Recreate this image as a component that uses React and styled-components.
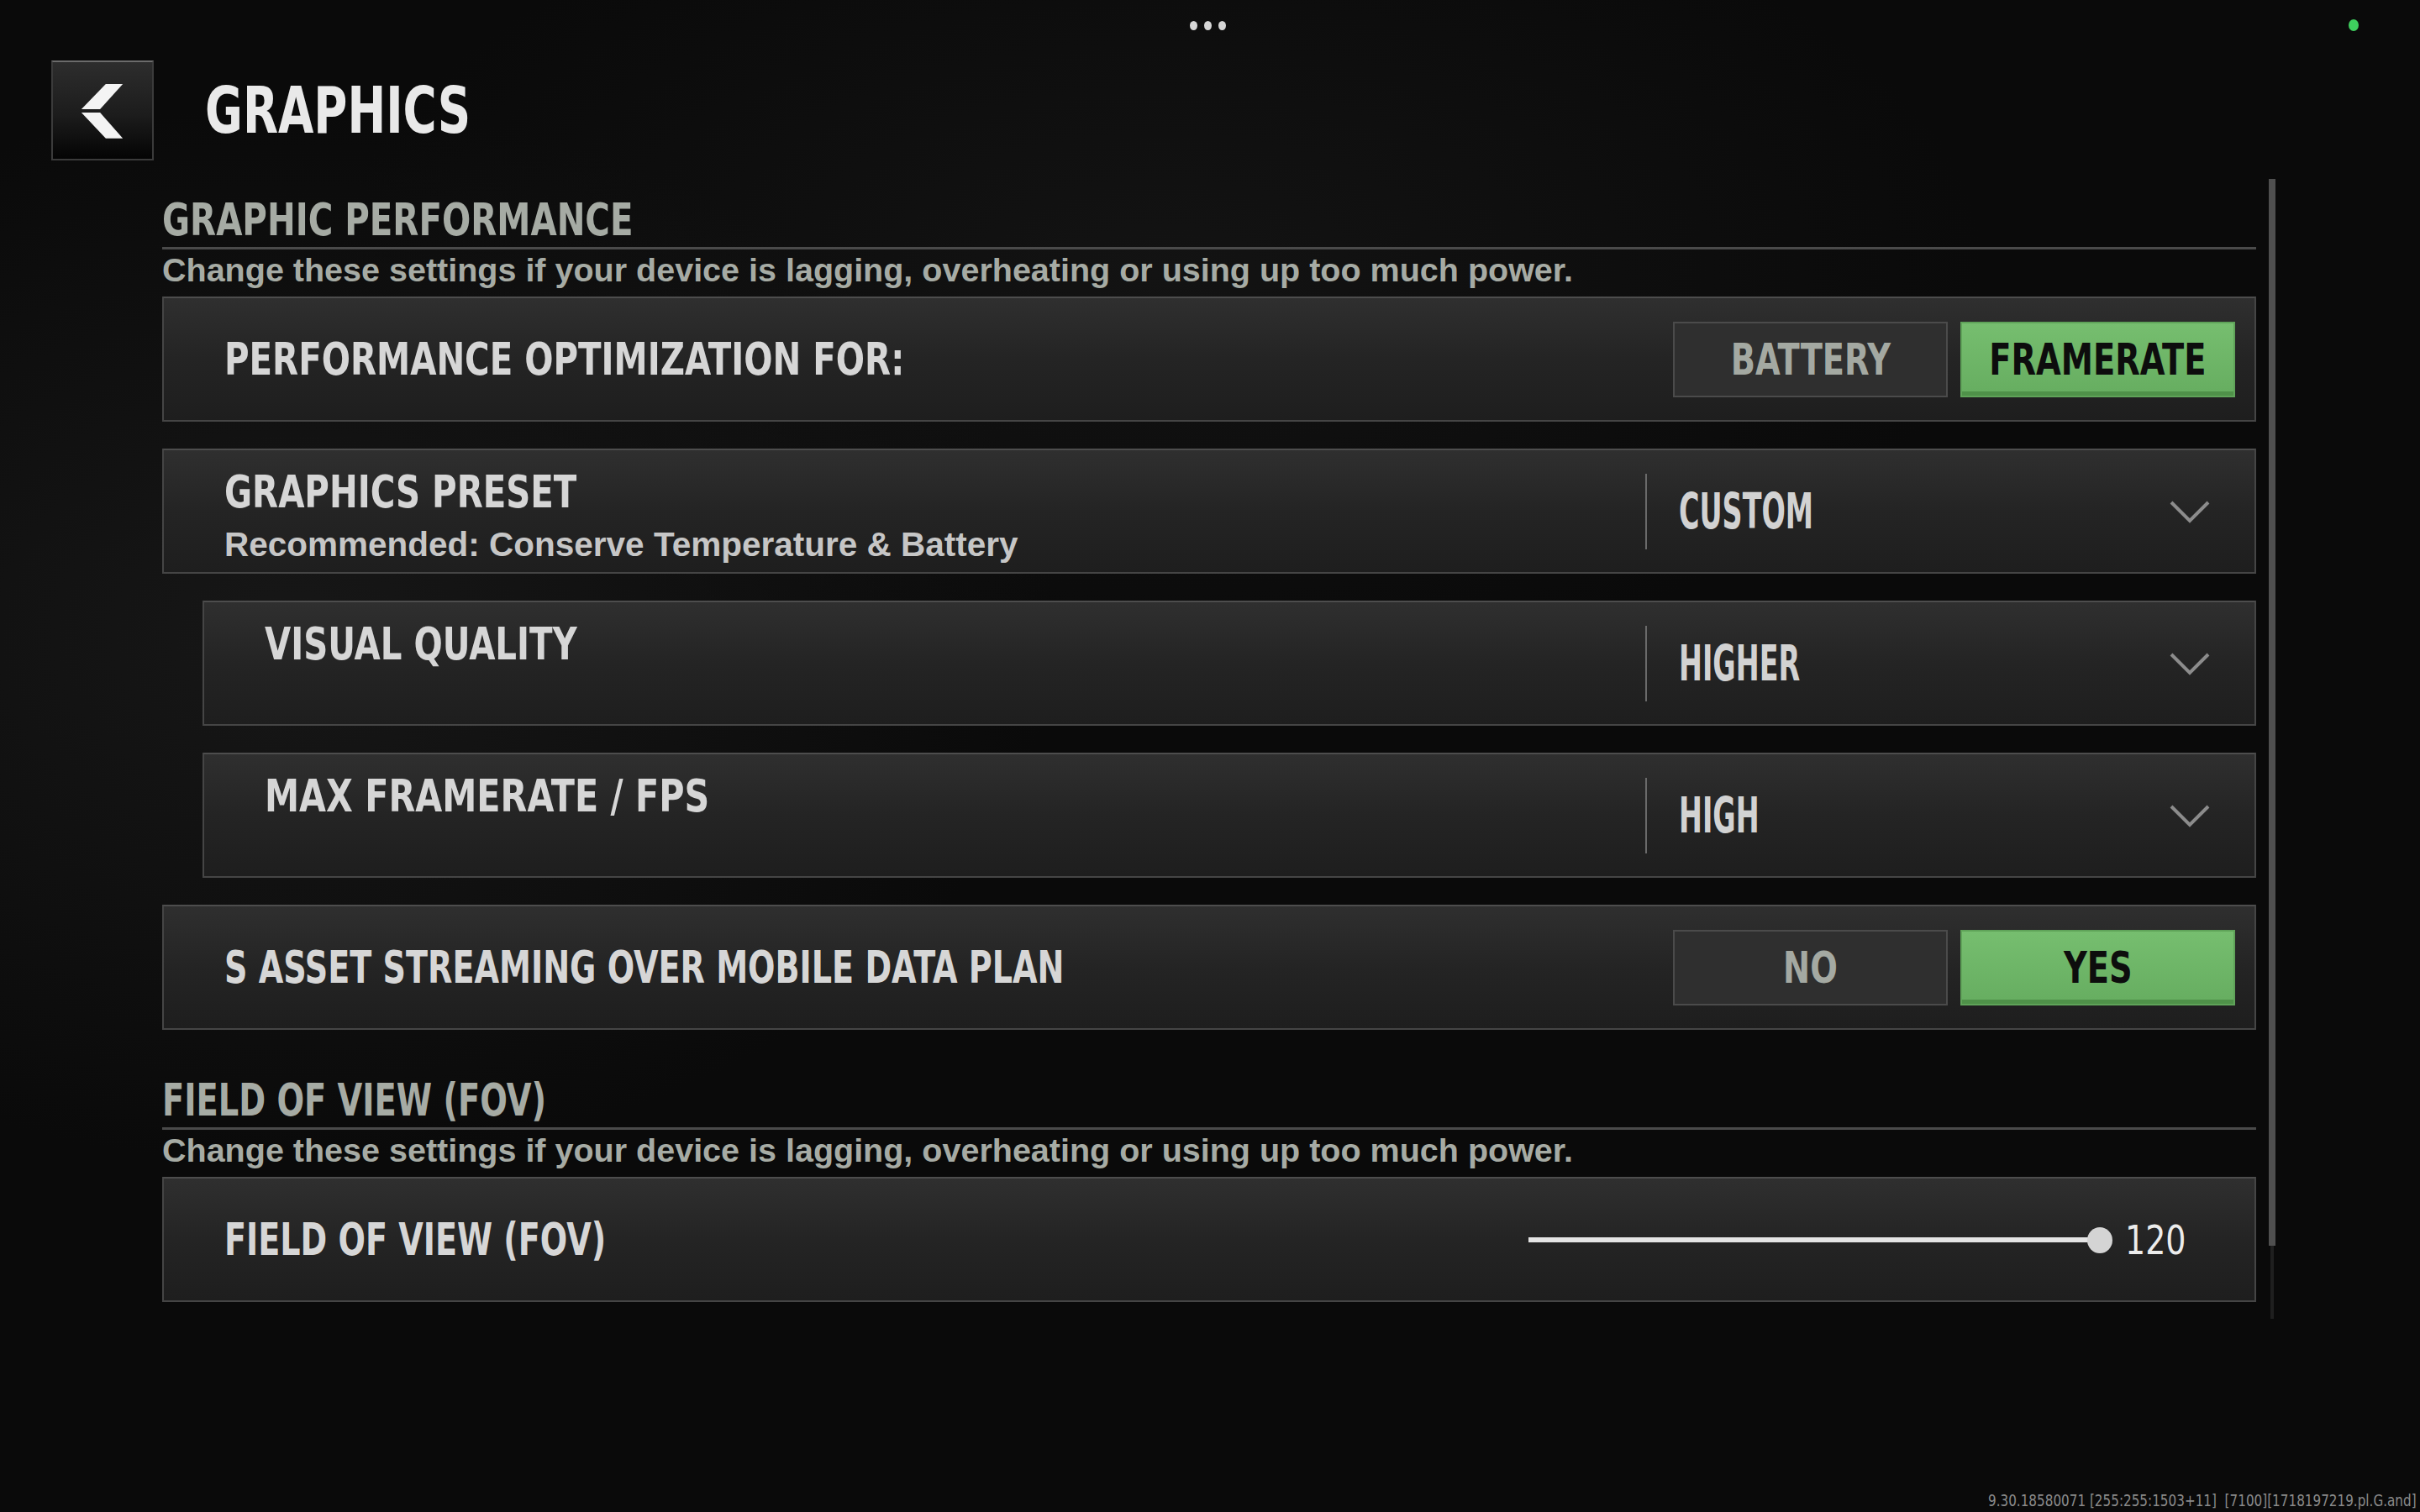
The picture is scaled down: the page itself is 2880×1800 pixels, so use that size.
import React from 'react';
import styled, { createGlobalStyle, css } from 'styled-components';

const GlobalStyle = createGlobalStyle`
    html, body {
        margin: 0;
        padding: 0;
        background: #0a0a0a;
    }
`;

const narrow = `"Liberation Sans Narrow", "DejaVu Sans Condensed", "Liberation Sans", sans-serif`;
const wide = `"Liberation Sans", "DejaVu Sans", sans-serif`;

// the game font is much narrower than anything installed, so caps text is squeezed
const squeeze = (x, origin = 'left') => css`
    display: inline-block;
    white-space: nowrap;
    transform: scaleX(${x});
    transform-origin: ${origin} center;
`;

const Page = styled.div`
    width: 2880px;
    height: 1800px;
    position: relative;
    overflow: hidden;
    background:
        radial-gradient(ellipse 1300px 900px at 12% 42%, #171717 0%, rgba(10, 10, 10, 0) 70%),
        radial-gradient(ellipse 1400px 700px at 48% 18%, #131313 0%, rgba(10, 10, 10, 0) 70%),
        #0a0a0a;
    font-family: ${narrow};
`;

const Dots = styled.div`
    position: absolute;
    top: 25px;
    left: 1416px;
    display: flex;
    gap: 8px;

    span {
        width: 9px;
        height: 11px;
        border-radius: 50%;
        background: #d6d6d6;
    }
`;

const StatusDot = styled.div`
    position: absolute;
    top: 23px;
    left: 2795px;
    width: 12px;
    height: 14px;
    border-radius: 50%;
    background: #3ecf5e;
`;

const Header = styled.header`
    display: flex;
    align-items: center;
    gap: 61px;
    padding: 72px 0 0 61px;
`;

const BackButton = styled.button`
    width: 122px;
    height: 119px;
    padding: 0;
    display: flex;
    align-items: center;
    justify-content: center;
    box-sizing: border-box;
    border: 2px solid #3b3b3b;
    border-top-color: #6b6b6b;
    background: linear-gradient(180deg, #2d2d2d 0%, #1c1c1c 55%, #040404 100%);
    cursor: pointer;
`;

const Title = styled.h1`
    margin: 0;
    font-size: 76px;
    line-height: 1;
    font-weight: 700;
    color: #e9e9e9;
    ${squeeze(0.8)}
`;

const Body = styled.div`
    display: flex;
    margin-top: 22px;
    padding-left: 193px;
`;

const Content = styled.main`
    width: 2492px;
    padding-top: 16px;
    display: flex;
    flex-direction: column;
`;

const Scrollbar = styled.div`
    margin-left: 15px;
    width: 8px;
    height: 1357px;
    display: flex;
    flex-direction: column;
    align-items: center;
`;

const ScrollThumb = styled.div`
    width: 8px;
    height: 1270px;
    background: #4f4f4f;
`;

const ScrollTrack = styled.div`
    width: 4px;
    flex: 1;
    background: #1f1f1f;
`;

const SectionTitle = styled.h2`
    margin: ${({ first }) => (first ? '0' : '51px 0 0')};
    font-size: 54px;
    line-height: 65px;
    font-weight: 700;
    color: #a6aba4;
    border-bottom: 3px solid #4a4a4a;

    span {
        ${({ first }) => squeeze(first ? 0.83 : 0.79)}
    }
`;

const SectionDesc = styled.p`
    margin: 0 0 8px;
    font-family: ${wide};
    font-size: 39.5px;
    line-height: 48px;
    font-weight: 700;
    color: #a6aba4;
`;

const Row = styled.div`
    box-sizing: border-box;
    height: 149px;
    margin-top: ${({ first }) => (first ? '0' : '32px')};
    margin-left: ${({ indent }) => (indent ? '48px' : '0')};
    display: flex;
    align-items: ${({ top }) => (top ? 'stretch' : 'center')};
    border: 2px solid #454545;
    border-top-color: #4d4d4d;
    background: linear-gradient(180deg, #2f2f2f 0%, #242424 50%, #1e1e1e 100%);
`;

const LabelBlock = styled.div`
    flex: 1;
    min-width: 0;
    padding-left: 72px;
    ${({ top }) =>
        top &&
        css`
            padding-top: 17px;
        `}
`;

const Label = styled.div`
    font-size: 54px;
    line-height: 66px;
    font-weight: 700;
    color: #d6d6d6;
    ${({ squeezeX }) => squeeze(squeezeX || 0.83)}
`;

const SubLabel = styled.div`
    margin-top: 6px;
    font-family: ${wide};
    font-size: 40.5px;
    line-height: 46px;
    font-weight: 700;
    color: #c6c6c6;
`;

const Toggle = styled.div`
    display: flex;
    gap: 15px;
    padding-right: 23px;
`;

const ToggleButton = styled.button`
    width: 327px;
    height: 90px;
    box-sizing: border-box;
    padding: 0;
    font-family: ${narrow};
    font-size: 52px;
    font-weight: 700;
    cursor: pointer;
    ${({ active }) =>
        active
            ? css`
                  color: #0d0d0d;
                  border: 2px solid #5fa359;
                  background: linear-gradient(180deg, #76be6f 0%, #66ad60 100%);
                  box-shadow: inset 0 -5px 0 #4f9149;
              `
            : css`
                  color: #a4a9a2;
                  border: 2px solid #4b4b4b;
                  background: #2f2f2f;
              `}

    span {
        ${squeeze(0.82, 'center')}
    }
`;

const Dropdown = styled.div`
    width: 725px;
    align-self: center;
    display: flex;
    align-items: center;
    height: 90px;
    border-left: 2px solid #6a6a6a;
    box-sizing: border-box;
    padding: 0 53px 0 38px;
`;

const DropValue = styled.span`
    flex: 1;
    font-size: 58px;
    line-height: 1;
    font-weight: 700;
    color: #d2d2d2;
    transform: scaleX(0.64);
    transform-origin: left center;
`;

const Slider = styled.div`
    display: flex;
    align-items: center;
    padding-right: 72px;
`;

const Track = styled.div`
    width: 680px;
    height: 6px;
    background: #e4e4e4;
    position: relative;
`;

const Knob = styled.div`
    position: absolute;
    right: -15px;
    top: 50%;
    width: 30px;
    height: 31px;
    margin-top: -15px;
    border-radius: 50%;
    background: #d4d4d4;
`;

const SliderValue = styled.span`
    margin-left: 30px;
    font-size: 48px;
    line-height: 1;
    color: #ececec;
    ${squeeze(0.88)}
`;

const Version = styled.div`
    position: absolute;
    right: 4px;
    bottom: 3px;
    font-size: 19px;
    color: #8a8a8a;
    white-space: pre;
    transform: scaleX(0.89);
    transform-origin: right center;
`;

const BackIcon = () => (
    <svg width="122" height="119" viewBox="0 0 122 119">
        <polygon points="65,27 86,27 58,58 35,58" fill="#f4f4f4" />
        <polygon points="35,62 58,62 86,94 65,94" fill="#f4f4f4" />
    </svg>
);

const ChevronDown = () => (
    <svg width="48" height="28" viewBox="0 0 48 28">
        <polyline
            points="2,3 24,25 46,3"
            fill="none"
            stroke="#8c8c8c"
            strokeWidth="4"
        />
    </svg>
);

const ToggleRow = ({ label, options, active, first, squeezeX }) => (
    <Row first={first}>
        <LabelBlock>
            <Label squeezeX={squeezeX}>{label}</Label>
        </LabelBlock>
        <Toggle>
            {options.map((o) => (
                <ToggleButton key={o} active={o === active}>
                    <span>{o}</span>
                </ToggleButton>
            ))}
        </Toggle>
    </Row>
);

const SelectRow = ({ label, sub, value, indent, squeezeX }) => (
    <Row top indent={indent}>
        <LabelBlock top>
            <Label squeezeX={squeezeX}>{label}</Label>
            {sub && <SubLabel>{sub}</SubLabel>}
        </LabelBlock>
        <Dropdown>
            <DropValue>{value}</DropValue>
            <ChevronDown />
        </Dropdown>
    </Row>
);

const desc =
    'Change these settings if your device is lagging, overheating or using up too much power.';

const App = () => (
    <Page>
        <GlobalStyle />
        <Dots>
            <span />
            <span />
            <span />
        </Dots>
        <StatusDot />
        <Header>
            <BackButton aria-label="Back">
                <BackIcon />
            </BackButton>
            <Title>GRAPHICS</Title>
        </Header>
        <Body>
            <Content>
                <SectionTitle first>
                    <span>GRAPHIC PERFORMANCE</span>
                </SectionTitle>
                <SectionDesc>{desc}</SectionDesc>
                <ToggleRow
                    first
                    label="PERFORMANCE OPTIMIZATION FOR:"
                    options={['BATTERY', 'FRAMERATE']}
                    active="FRAMERATE"
                />
                <SelectRow
                    label="GRAPHICS PRESET"
                    sub="Recommended: Conserve Temperature & Battery"
                    value="CUSTOM"
                />
                <SelectRow indent label="VISUAL QUALITY" value="HIGHER" />
                <SelectRow
                    indent
                    squeezeX={0.85}
                    label="MAX FRAMERATE / FPS"
                    value="HIGH"
                />
                <ToggleRow
                    squeezeX={0.785}
                    label="S ASSET STREAMING OVER MOBILE DATA PLAN"
                    options={['NO', 'YES']}
                    active="YES"
                />
                <SectionTitle>
                    <span>FIELD OF VIEW (FOV)</span>
                </SectionTitle>
                <SectionDesc>{desc}</SectionDesc>
                <Row first>
                    <LabelBlock>
                        <Label squeezeX={0.785}>FIELD OF VIEW (FOV)</Label>
                    </LabelBlock>
                    <Slider>
                        <Track>
                            <Knob />
                        </Track>
                        <SliderValue>120</SliderValue>
                    </Slider>
                </Row>
            </Content>
            <Scrollbar>
                <ScrollThumb />
                <ScrollTrack />
            </Scrollbar>
        </Body>
        <Version>
            9.30.18580071 [255:255:1503+11]  [7100][1718197219.pl.G.and]
        </Version>
    </Page>
);

export default App;
